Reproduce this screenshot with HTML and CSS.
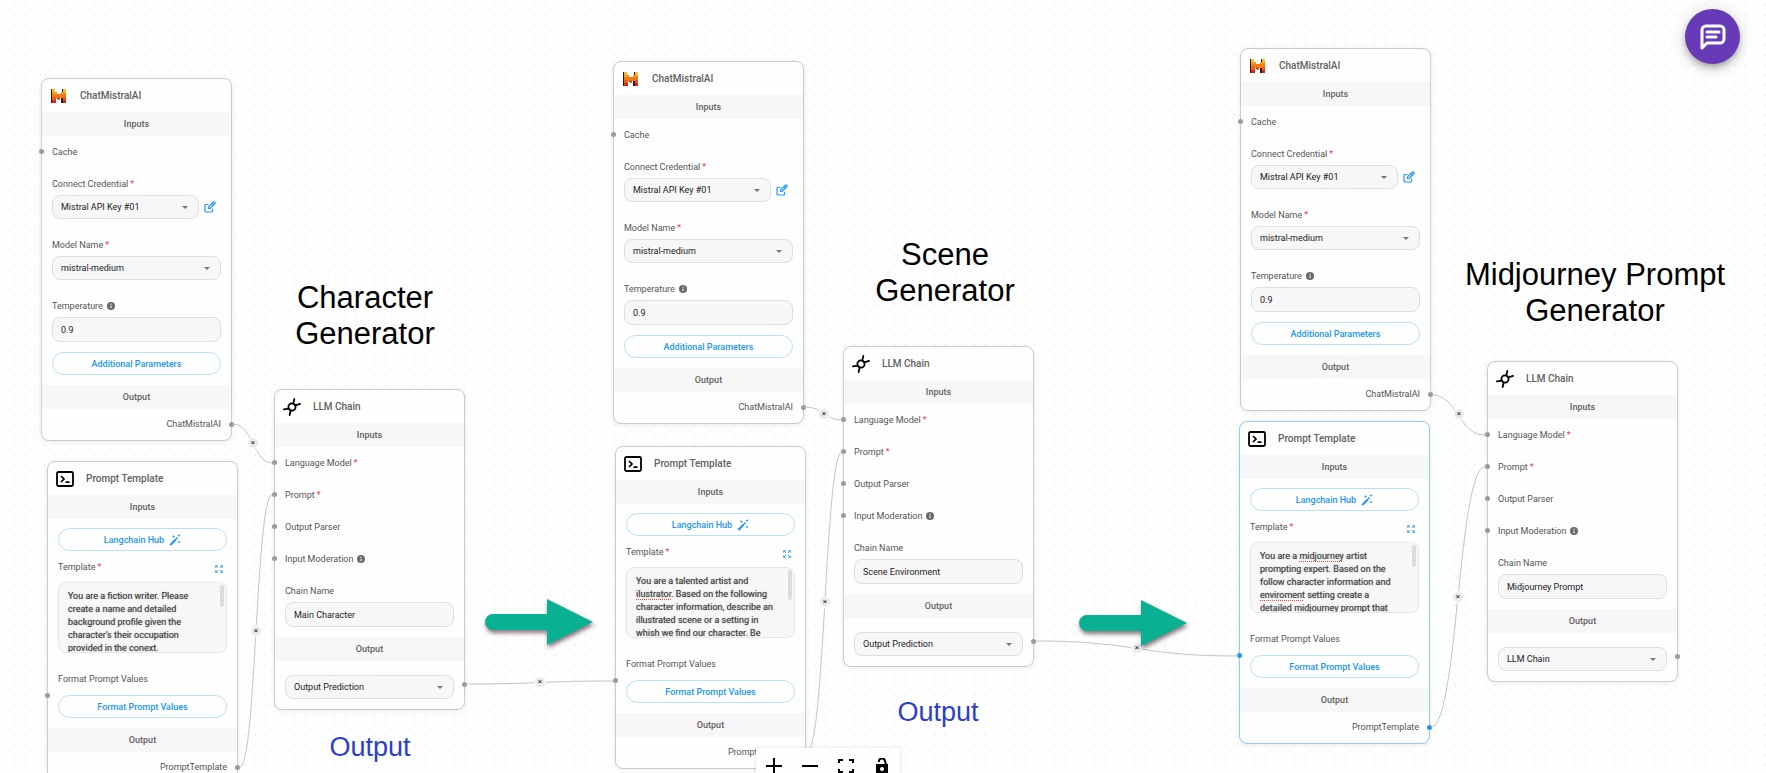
FILE: index.html
```html
<!DOCTYPE html>
<html lang="en">
<head>
    <meta charset="UTF-8">
    <meta name="viewport" content="width=device-width, initial-scale=1.0">
    <title>Midjourney Prompt Chatflow</title>
    <link rel="stylesheet" href="styles.css">
</head>
<body>

    <!-- shared icons -->
    <svg class="sprite" aria-hidden="true">
        <symbol id="i-mistral" viewBox="-1 -2 18 18">
            <path fill="#2b1a12" d="M0 0h3v14H0zM6 5h2v5H6zM11 0h2v5h-2zM10 8h2v6h-2z"/>
            <path fill="#f7c52b" d="M1 0h3v3H1zM12 0h3v3h-3z"/>
            <path fill="#f29b1d" d="M1 3h5v3H1zM10 3h5v3h-5z"/>
            <path fill="#f57c13" d="M1 5h14v4H1z"/>
            <path fill="#ee5a1c" d="M1 8h4v3H1zM7 8h2v3H7zM12 8h3v3h-3z"/>
            <path fill="#e32318" d="M1 11h4v3H1zM12 11h3v3h-3z"/>
        </symbol>
        <symbol id="i-prompt" viewBox="0 -1 18 18">
            <rect x="1" y="1" width="16" height="14" rx="1.5" fill="none" stroke="#000" stroke-width="1.8"/>
            <path d="M5 5l3 3-3 3M9.5 11.2h4" fill="none" stroke="#000" stroke-width="1.7"/>
        </symbol>
        <symbol id="i-chain" viewBox="0 0 18 18">
            <g fill="none" stroke="#000" stroke-width="1.8" stroke-linecap="round">
                <circle cx="9" cy="9" r="3.6"/>
                <path d="M12 7.400c1.200-.8 2.500-.3 5-1.500M10.500 5.900c-.5-1.500.6-2.500.8-4.900M6 10.600c-1.200.8-2.500-.1-5 .8M7.500 12.100c.5 1.500-.7 2.500-.8 4.900"/>
            </g>
        </symbol>
        <symbol id="i-edit" viewBox="0 0 24 24">
            <g fill="none" stroke="currentColor" stroke-width="2.400" stroke-linecap="round" stroke-linejoin="round">
                <path d="M8 7H4a2 2 0 0 0-2 2v11a2 2 0 0 0 2 2h11a2 2 0 0 0 2-2v-4"/>
                <path d="M9 15h3l9.500-9.500a2.100 2.100 0 0 0-3-3L9 12v3M16 5l3 3"/>
            </g>
        </symbol>
        <symbol id="i-info" viewBox="0 0 24 24">
            <circle cx="12" cy="12" r="12" fill="#6a6a6a"/>
            <path d="M12 5v3.500M12 10.500v8" stroke="#fff" stroke-width="3"/>
        </symbol>
        <symbol id="i-wand" viewBox="0 0 24 24">
            <path fill="currentColor" d="M1 20.500L12.500 9l3 3L4 23.500zM13.500 8l2-2 3 3-2 2zM9 2l1 2 2 1-2 1-1 2-1-2-2-1 2-1zM20 0l1 2 2 1-2 1-1 2-1-2-2-1 2-1zM20 13l1 2 2 1-2 1-1 2-1-2-2-1 2-1z"/>
        </symbol>
        <symbol id="i-expand" viewBox="0 0 24 24">
            <path d="M2 8V2h6M2 2l7 7M16 2h6v6M22 2l-7 7M2 16v6h6M2 22l7-7M22 16v6h-6M22 22l-7-7" fill="none" stroke="currentColor" stroke-width="2.600"/>
        </symbol>
        <symbol id="i-arrow" viewBox="0 0 108 46">
            <path fill="#09b092" d="M8 15h54V0l46 23-46 23V31H8a8 8 0 0 1 0-16z"/>
        </symbol>
    </svg>

    <main class="canvas">

        <!-- column 1 -->
        <section class="node" id="mistral-1">
            <header class="node-head"><svg class="logo"><use href="#i-mistral"/></svg><h2>ChatMistralAI</h2></header>
            <div class="band">Inputs</div>
            <div class="row"><i class="dot"></i><span class="label">Cache</span></div>
            <div class="row">
                <label class="label" for="cred-1">Connect Credential <b>*</b></label>
                <div class="inline">
                    <select class="field" id="cred-1"><option>Mistral API Key #01</option></select>
                    <button class="icon-btn" aria-label="Edit credential"><svg><use href="#i-edit"/></svg></button>
                </div>
            </div>
            <div class="row">
                <label class="label" for="model-1">Model Name <b>*</b></label>
                <select class="field" id="model-1"><option>mistral-medium</option></select>
            </div>
            <div class="row">
                <label class="label" for="temp-1">Temperature <svg class="info"><use href="#i-info"/></svg></label>
                <input class="field" id="temp-1" type="text" value="0.9">
            </div>
            <div class="action"><button class="pill">Additional Parameters</button></div>
            <div class="band">Output</div>
            <div class="out">ChatMistralAI<i class="dot right"></i></div>
        </section>

        <section class="node" id="prompt-1">
            <header class="node-head"><svg class="logo"><use href="#i-prompt"/></svg><h2>Prompt Template</h2></header>
            <div class="band">Inputs</div>
            <div class="action top"><button class="pill">Langchain Hub <svg><use href="#i-wand"/></svg></button></div>
            <div class="row">
                <div class="label-bar">
                    <label class="label" for="template-1">Template <b>*</b></label>
                    <button class="expand" aria-label="Expand"><svg><use href="#i-expand"/></svg></button>
                </div>
                <div class="template" id="template-1" role="textbox" aria-label="Template" contenteditable="true" spellcheck="false">You are a fiction writer. Please create a name and detailed background profile given the character's their occupation provided in the <u>conext</u>.</div>
            </div>
            <div class="row wide">
                <i class="dot"></i>
                <span class="label">Format Prompt Values</span>
                <button class="pill">Format Prompt Values</button>
            </div>
            <div class="band">Output</div>
            <div class="out">PromptTemplate<i class="dot right"></i></div>
        </section>

        <section class="node" id="chain-1">
            <header class="node-head"><svg class="logo"><use href="#i-chain"/></svg><h2>LLM Chain</h2></header>
            <div class="band">Inputs</div>
            <div class="row"><i class="dot"></i><span class="label">Language Model <b>*</b></span></div>
            <div class="row"><i class="dot"></i><span class="label">Prompt <b>*</b></span></div>
            <div class="row"><i class="dot"></i><span class="label">Output Parser</span></div>
            <div class="row"><i class="dot"></i><span class="label">Input Moderation <svg class="info"><use href="#i-info"/></svg></span></div>
            <div class="row">
                <label class="label" for="name-1">Chain Name</label>
                <input class="field" id="name-1" type="text" value="Main Character">
            </div>
            <div class="band">Output</div>
            <div class="out-select">
                <select class="field" aria-label="Output"><option>Output Prediction</option></select>
                <i class="dot right"></i>
            </div>
        </section>

        <!-- column 2 -->
        <section class="node" id="mistral-2">
            <header class="node-head"><svg class="logo"><use href="#i-mistral"/></svg><h2>ChatMistralAI</h2></header>
            <div class="band">Inputs</div>
            <div class="row"><i class="dot"></i><span class="label">Cache</span></div>
            <div class="row">
                <label class="label" for="cred-2">Connect Credential <b>*</b></label>
                <div class="inline">
                    <select class="field" id="cred-2"><option>Mistral API Key #01</option></select>
                    <button class="icon-btn" aria-label="Edit credential"><svg><use href="#i-edit"/></svg></button>
                </div>
            </div>
            <div class="row">
                <label class="label" for="model-2">Model Name <b>*</b></label>
                <select class="field" id="model-2"><option>mistral-medium</option></select>
            </div>
            <div class="row">
                <label class="label" for="temp-2">Temperature <svg class="info"><use href="#i-info"/></svg></label>
                <input class="field" id="temp-2" type="text" value="0.9">
            </div>
            <div class="action"><button class="pill">Additional Parameters</button></div>
            <div class="band">Output</div>
            <div class="out">ChatMistralAI<i class="dot right"></i></div>
        </section>

        <section class="node" id="prompt-2">
            <header class="node-head"><svg class="logo"><use href="#i-prompt"/></svg><h2>Prompt Template</h2></header>
            <div class="band">Inputs</div>
            <div class="action top"><button class="pill">Langchain Hub <svg><use href="#i-wand"/></svg></button></div>
            <div class="row">
                <div class="label-bar">
                    <label class="label" for="template-2">Template <b>*</b></label>
                    <button class="expand" aria-label="Expand"><svg><use href="#i-expand"/></svg></button>
                </div>
                <div class="template long" id="template-2" role="textbox" aria-label="Template" contenteditable="true" spellcheck="false">You are a talented artist and <u>ilustrator</u>. Based on the following character information, describe an illustrated scene or a setting in whish we find our character. Be</div>
            </div>
            <div class="row wide">
                <i class="dot"></i>
                <span class="label">Format Prompt Values</span>
                <button class="pill">Format Prompt Values</button>
            </div>
            <div class="band">Output</div>
            <div class="out">PromptTemplate<i class="dot right"></i></div>
        </section>

        <section class="node" id="chain-2">
            <header class="node-head"><svg class="logo"><use href="#i-chain"/></svg><h2>LLM Chain</h2></header>
            <div class="band">Inputs</div>
            <div class="row"><i class="dot"></i><span class="label">Language Model <b>*</b></span></div>
            <div class="row"><i class="dot"></i><span class="label">Prompt <b>*</b></span></div>
            <div class="row"><i class="dot"></i><span class="label">Output Parser</span></div>
            <div class="row"><i class="dot"></i><span class="label">Input Moderation <svg class="info"><use href="#i-info"/></svg></span></div>
            <div class="row">
                <label class="label" for="name-2">Chain Name</label>
                <input class="field" id="name-2" type="text" value="Scene Environment">
            </div>
            <div class="band">Output</div>
            <div class="out-select">
                <select class="field" aria-label="Output"><option>Output Prediction</option></select>
                <i class="dot right"></i>
            </div>
        </section>

        <!-- column 3 -->
        <section class="node" id="mistral-3">
            <header class="node-head"><svg class="logo"><use href="#i-mistral"/></svg><h2>ChatMistralAI</h2></header>
            <div class="band">Inputs</div>
            <div class="row"><i class="dot"></i><span class="label">Cache</span></div>
            <div class="row">
                <label class="label" for="cred-3">Connect Credential <b>*</b></label>
                <div class="inline">
                    <select class="field" id="cred-3"><option>Mistral API Key #01</option></select>
                    <button class="icon-btn" aria-label="Edit credential"><svg><use href="#i-edit"/></svg></button>
                </div>
            </div>
            <div class="row">
                <label class="label" for="model-3">Model Name <b>*</b></label>
                <select class="field" id="model-3"><option>mistral-medium</option></select>
            </div>
            <div class="row">
                <label class="label" for="temp-3">Temperature <svg class="info"><use href="#i-info"/></svg></label>
                <input class="field" id="temp-3" type="text" value="0.9">
            </div>
            <div class="action"><button class="pill">Additional Parameters</button></div>
            <div class="band">Output</div>
            <div class="out">ChatMistralAI<i class="dot right"></i></div>
        </section>

        <section class="node selected" id="prompt-3">
            <header class="node-head"><svg class="logo"><use href="#i-prompt"/></svg><h2>Prompt Template</h2></header>
            <div class="band">Inputs</div>
            <div class="action top"><button class="pill">Langchain Hub <svg><use href="#i-wand"/></svg></button></div>
            <div class="row">
                <div class="label-bar">
                    <label class="label" for="template-3">Template <b>*</b></label>
                    <button class="expand" aria-label="Expand"><svg><use href="#i-expand"/></svg></button>
                </div>
                <div class="template" id="template-3" role="textbox" aria-label="Template" contenteditable="true" spellcheck="false">You are a <u>midjourney</u> artist prompting expert. Based on the follow character information and <u>enviroment</u> setting create a detailed <u>midjourney</u> prompt that</div>
            </div>
            <div class="row wide">
                <i class="dot"></i>
                <span class="label">Format Prompt Values</span>
                <button class="pill">Format Prompt Values</button>
            </div>
            <div class="band">Output</div>
            <div class="out">PromptTemplate<i class="dot right"></i></div>
        </section>

        <section class="node" id="chain-3">
            <header class="node-head"><svg class="logo"><use href="#i-chain"/></svg><h2>LLM Chain</h2></header>
            <div class="band">Inputs</div>
            <div class="row"><i class="dot"></i><span class="label">Language Model <b>*</b></span></div>
            <div class="row"><i class="dot"></i><span class="label">Prompt <b>*</b></span></div>
            <div class="row"><i class="dot"></i><span class="label">Output Parser</span></div>
            <div class="row"><i class="dot"></i><span class="label">Input Moderation <svg class="info"><use href="#i-info"/></svg></span></div>
            <div class="row">
                <label class="label" for="name-3">Chain Name</label>
                <input class="field" id="name-3" type="text" value="Midjourney Prompt">
            </div>
            <div class="band">Output</div>
            <div class="out-select">
                <select class="field" aria-label="Output"><option>LLM Chain</option></select>
                <i class="dot right"></i>
            </div>
        </section>

        <!-- connections -->
        <svg class="edges">
            <path d="M233 424C253 424 253 463 272 463"/>
            <path d="M240 767C256 767 256 495 272 495"/>
            <path d="M466 684C540 684 540 681 613 681"/>
            <path d="M805 407C824 407 824 420 842 420"/>
            <path d="M807 752C825 752 825 452 842 452"/>
            <path d="M1036 641C1137 641 1137 656 1238 656"/>
            <path d="M1432 395C1458 395 1458 435 1485 435"/>
            <path d="M1431 727C1458 727 1458 467 1485 467"/>
        </svg>
        <button class="cut" id="cut-1" aria-label="Remove connection">×</button>
        <button class="cut" id="cut-2" aria-label="Remove connection">×</button>
        <button class="cut" id="cut-3" aria-label="Remove connection">×</button>
        <button class="cut" id="cut-4" aria-label="Remove connection">×</button>
        <button class="cut" id="cut-5" aria-label="Remove connection">×</button>
        <button class="cut" id="cut-6" aria-label="Remove connection">×</button>
        <button class="cut" id="cut-7" aria-label="Remove connection">×</button>
        <button class="cut" id="cut-8" aria-label="Remove connection">×</button>

        <!-- notes on the canvas -->
        <h1 class="note" id="note-1">Character<br>Generator</h1>
        <h1 class="note" id="note-2">Scene<br>Generator</h1>
        <h1 class="note" id="note-3">Midjourney Prompt<br>Generator</h1>
        <p class="note small" id="note-4">Output</p>
        <p class="note small" id="note-5">Output</p>
        <svg class="arrow" id="arrow-1"><use href="#i-arrow"/></svg>
        <svg class="arrow" id="arrow-2"><use href="#i-arrow"/></svg>

        <div class="controls">
            <button aria-label="Zoom in"><svg viewBox="0 0 16 16"><path d="M8 0v16M0 8h16"/></svg></button>
            <button aria-label="Zoom out"><svg viewBox="0 0 16 16"><path d="M0 8h16"/></svg></button>
            <button aria-label="Fit view"><svg viewBox="0 0 16 16"><path d="M1 5V2h4M11 2h4v3M15 11v3h-4M5 14H1v-3"/></svg></button>
            <button aria-label="Unlock"><svg viewBox="0 0 16 16"><path d="M5 4a3 3 0 0 1 6-1l1 4"/><path class="solid" d="M2 6h12v10H2z"/><circle cx="8" cy="11" r="2" fill="#fff" stroke="none"/></svg></button>
        </div>

        <button class="chat" aria-label="Chat">
            <svg viewBox="0 0 24 24"><path d="M1 23V5a4 4 0 0 1 4-4h14a4 4 0 0 1 4 4v9a4 4 0 0 1-4 4H6zM6 7h12M6 12h9"/></svg>
        </button>
    </main>

</body>
</html>
```
FILE: styles.css
```css
* {
    box-sizing: border-box;
}

body {
    margin: 0;
    font-family: Roboto, 'Open Sans', sans-serif;
    font-size: 9px;
    line-height: 12px;
    color: #555;
}

button, input, select {
    font: inherit;
    margin: 0;
}

button {
    cursor: pointer;
    padding: 0;
    border: none;
    background: none;
}

.sprite {
    display: none;
}

.canvas {
    position: relative;
    height: 100vh;
    overflow: hidden;
    background-color: #fefefe;
    background-image: radial-gradient(circle, #ececec 0, #ececec 0.5px, transparent 1px);
    background-size: 10px 10px;
}

/* nodes */
.node {
    position: absolute;
    width: 191px;
    background-color: #fefefe;
    border: 1px solid #cbcbcb;
    border-radius: 8px;
    box-shadow: 0 1px 4px 1px rgba(0, 0, 0, 0.06);
}

.node.selected {
    border-color: #90caf9;
}

#mistral-1 { left: 41px; top: 78px; }
#prompt-1 { left: 47px; top: 461px; }
#chain-1 { left: 274px; top: 389px; }
#mistral-2 { left: 613px; top: 61px; }
#prompt-2 { left: 615px; top: 446px; }
#chain-2 { left: 843px; top: 346px; }
#mistral-3 { left: 1240px; top: 48px; }
#prompt-3 { left: 1239px; top: 421px; }
#chain-3 { left: 1487px; top: 361px; }

.node-head {
    display: flex;
    align-items: center;
    height: 33px;
    padding-left: 8px;
    gap: 12px;
}

.node-head h2 {
    margin: 0;
    font-size: 10px;
    font-weight: 500;
    line-height: 14px;
    color: #616161;
}

.logo {
    width: 18px;
    height: 18px;
}

.band {
    height: 24px;
    line-height: 24px;
    text-align: center;
    font-weight: 500;
    color: #616161;
    background-color: #f7f7f7;
}

.row {
    position: relative;
    display: flex;
    flex-direction: column;
    gap: 5px;
    padding: 10px;
}

.row.wide {
    gap: 10px;
}

.label {
    display: flex;
    align-items: center;
    gap: 2px;
    height: 12px;
    white-space: nowrap;
}

.label b {
    color: #f44336;
    font-weight: 400;
}

.info {
    width: 8px;
    height: 8px;
    margin-left: 2px;
}

.inline {
    display: flex;
    align-items: center;
    gap: 5px;
    padding-right: 5px;
}

.field {
    width: 100%;
    height: 25px;
    padding: 0 8px;
    border: 1px solid #dedede;
    border-radius: 8px;
    background-color: #f7f7f7;
    color: #222;
    outline: none;
}

select.field {
    height: 24px;
    appearance: none;
    background-image: url("data:image/svg+xml,%3Csvg xmlns='http://www.w3.org/2000/svg' width='6' height='3'%3E%3Cpath d='M0 0h6L3 3z' fill='%23757575'/%3E%3C/svg%3E");
    background-repeat: no-repeat;
    background-position: right 10px center;
}

.icon-btn {
    flex: none;
    width: 12px;
    height: 12px;
    color: #2196f3;
}

.icon-btn svg, .expand svg {
    display: block;
    width: 100%;
    height: 100%;
}

.action {
    padding: 0 10px 10px;
}

.action.top {
    padding: 9px 10px 0;
}

.pill {
    display: flex;
    align-items: center;
    justify-content: center;
    gap: 5px;
    width: 100%;
    height: 23px;
    border: 1px solid #b9dffb;
    border-radius: 12px;
    color: #2196f3;
    font-weight: 500;
}

.pill svg {
    width: 12px;
    height: 12px;
}

.label-bar {
    display: flex;
    justify-content: space-between;
    height: 16px;
}

.expand {
    width: 8px;
    height: 8px;
    margin: 4px 4px 0 0;
    color: #2196f3;
}

.template {
    position: relative;
    height: 71px;
    padding: 7px 20px 0 9px;
    overflow: hidden;
    border: 1px solid #e6e6e6;
    border-radius: 8px;
    background-color: #f7f7f7;
    color: #444;
    line-height: 13px;
    text-shadow: 0 0 1px #777;
}

.template::after {
    content: "";
    position: absolute;
    top: 2px;
    right: 2px;
    width: 4px;
    height: 22px;
    border-radius: 2px;
    background-color: #dcdcdc;
}

.template.long::after {
    height: 30px;
}

.template u {
    text-decoration: underline dotted #f44336 1px;
    text-underline-offset: 2px;
}

.out {
    position: relative;
    height: 31px;
    padding-right: 10px;
    line-height: 30px;
    text-align: right;
}

.out-select {
    position: relative;
    padding: 14px 10px 10px;
}

.dot {
    position: absolute;
    left: -3px;
    top: calc(50% - 3px);
    width: 5px;
    height: 5px;
    border-radius: 50%;
    background-color: #9b9b9b;
}

.dot.right {
    left: auto;
    right: -3px;
}

.selected .dot {
    background-color: #2196f3;
}

/* connections */
.edges {
    position: absolute;
    inset: 0;
    width: 100%;
    height: 100%;
    fill: none;
    stroke: #c4c4c4;
    pointer-events: none;
}

.cut {
    position: absolute;
    width: 12px;
    height: 12px;
    border: 1px solid #fff;
    border-radius: 50%;
    background-color: #ebebeb;
    color: #222;
    font-size: 8px;
    line-height: 10px;
}

#cut-1 { left: 247px; top: 437px; }
#cut-2 { left: 250px; top: 625px; }
#cut-3 { left: 534px; top: 676px; }
#cut-4 { left: 818px; top: 408px; }
#cut-5 { left: 819px; top: 596px; }
#cut-6 { left: 1131px; top: 642px; }
#cut-7 { left: 1453px; top: 408px; }
#cut-8 { left: 1452px; top: 591px; }

/* notes */
.note {
    position: absolute;
    margin: 0;
    transform: translateX(-50%);
    font-family: 'Liberation Sans', Arial, sans-serif;
    font-size: 31px;
    font-weight: 400;
    line-height: 36px;
    color: #000;
    text-align: center;
    white-space: nowrap;
}

.note.small {
    font-size: 27px;
    color: #2b3fcc;
}

#note-1 { left: 365px; top: 280px; }
#note-2 { left: 945px; top: 237px; }
#note-3 { left: 1595px; top: 257px; }
#note-4 { left: 370px; top: 729px; }
#note-5 { left: 938px; top: 694px; }

.arrow {
    position: absolute;
    width: 108px;
    height: 46px;
    filter: drop-shadow(1px 3px 2px rgba(60, 30, 40, 0.6));
}

#arrow-1 { left: 485px; top: 599px; }
#arrow-2 { left: 1079px; top: 600px; }

/* overlay buttons */
.controls {
    position: absolute;
    left: 756px;
    bottom: -11px;
    display: flex;
    background-color: #fefefe;
    box-shadow: 0 0 2px 1px rgba(0, 0, 0, 0.08);
}

.controls button {
    display: flex;
    align-items: center;
    justify-content: center;
    width: 36px;
    height: 36px;
}

.controls svg {
    width: 16px;
    height: 16px;
    fill: none;
    stroke: #000;
    stroke-width: 2;
}

.controls .solid {
    fill: #000;
    stroke: none;
}

.chat {
    position: absolute;
    top: 9px;
    right: 26px;
    width: 55px;
    height: 55px;
    border-radius: 50%;
    background-color: #673ab7;
    box-shadow: 0 3px 5px -1px rgba(0, 0, 0, 0.2), 0 6px 10px rgba(0, 0, 0, 0.14), 0 1px 18px rgba(0, 0, 0, 0.12);
}

.chat svg {
    display: block;
    width: 24px;
    height: 24px;
    margin: auto;
    overflow: visible;
    fill: none;
    stroke: #fff;
    stroke-width: 3;
    stroke-linecap: round;
    stroke-linejoin: round;
}
```
